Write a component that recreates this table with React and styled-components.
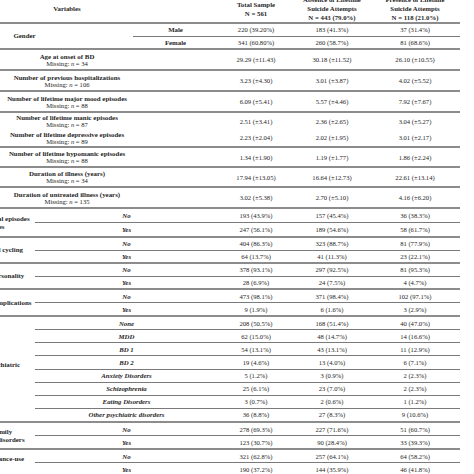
import styled, { createGlobalStyle } from "styled-components";

const GlobalStyle = createGlobalStyle`
  html, body {
    margin: 0;
    padding: 0;
    background: #fff;
  }
  body {
    font-family: "Liberation Serif", "DejaVu Serif", serif;
    color: #262626;
  }
`;

// value columns: total sample, absence, presence
const VALUE_COLS = "76px 76px 90px";

const measures = [
  {
    h: 21,
    items: [
      { label: "Age at onset of BD", missing: 34, values: ["29.29 (±11.43)", "30.18 (±11.52)", "26.10 (±10.55)"] },
    ],
  },
  {
    h: 21,
    items: [
      { label: "Number of previous hospitalizations", missing: 106, values: ["3.23 (±4.30)", "3.01 (±3.87)", "4.02 (±5.52)"] },
    ],
  },
  {
    h: 21,
    items: [
      { label: "Number of lifetime major mood episodes", missing: 88, values: ["6.09 (±5.41)", "5.57 (±4.46)", "7.92 (±7.67)"] },
    ],
  },
  {
    h: 35,
    items: [
      { label: "Number of lifetime manic episodes", missing: 87, values: ["2.51 (±3.41)", "2.36 (±2.65)", "3.04 (±5.27)"] },
      { label: "Number of lifetime depressive episodes", missing: 89, values: ["2.23 (±2.04)", "2.02 (±1.95)", "3.01 (±2.17)"] },
    ],
  },
  {
    h: 20,
    items: [
      { label: "Number of lifetime hypomanic episodes", missing: 88, values: ["1.34 (±1.90)", "1.19 (±1.77)", "1.86 (±2.24)"] },
    ],
  },
  {
    h: 20,
    items: [
      { label: "Duration of illness (years)", missing: 34, values: ["17.94 (±13.05)", "16.64 (±12.73)", "22.61 (±13.14)"] },
    ],
  },
  {
    h: 21,
    items: [
      { label: "Duration of untreated illness (years)", missing: 135, values: ["3.02 (±5.38)", "2.70 (±5.10)", "4.16 (±6.20)"] },
    ],
  },
];

const categories = [
  {
    h: 29,
    label: ["Number of lifetime seasonal episodes", "with mixed features"],
    rows: [
      ["No", "193 (43.9%)", "157 (45.4%)", "36 (38.3%)"],
      ["Yes", "247 (56.1%)", "189 (54.6%)", "58 (61.7%)"],
    ],
  },
  {
    h: 26,
    label: ["Lifetime history of rapid cycling"],
    rows: [
      ["No", "404 (86.3%)", "323 (88.7%)", "81 (77.9%)"],
      ["Yes", "64 (13.7%)", "41 (11.3%)", "23 (22.1%)"],
    ],
  },
  {
    h: 26,
    label: ["Comorbid borderline personality"],
    rows: [
      ["No", "378 (93.1%)", "297 (92.5%)", "81 (95.3%)"],
      ["Yes", "28 (6.9%)", "24 (7.5%)", "4 (4.7%)"],
    ],
  },
  {
    h: 27,
    label: ["Pregnancy and delivery complications"],
    rows: [
      ["No", "473 (98.1%)", "371 (98.4%)", "102 (97.1%)"],
      ["Yes", "9 (1.9%)", "6 (1.6%)", "3 (2.9%)"],
    ],
  },
  {
    h: 106,
    label: ["Lifetime comorbid psychiatric", "disorders"],
    rows: [
      ["None", "208 (50.5%)", "168 (51.4%)", "40 (47.0%)"],
      ["MDD", "62 (15.0%)", "48 (14.7%)", "14 (16.6%)"],
      ["BD 1", "54 (13.1%)", "43 (13.1%)", "11 (12.9%)"],
      ["BD 2", "19 (4.6%)", "13 (4.0%)", "6 (7.1%)"],
      ["Anxiety Disorders", "5 (1.2%)", "3 (0.9%)", "2 (2.3%)"],
      ["Schizophrenia", "25 (6.1%)", "23 (7.0%)", "2 (2.3%)"],
      ["Eating Disorders", "3 (0.7%)", "2 (0.6%)", "1 (1.2%)"],
      ["Other psychiatric disorders", "36 (8.8%)", "27 (8.3%)", "9 (10.6%)"],
    ],
  },
  {
    h: 27,
    label: ["Positive history in family", "members of psychiatric disorders"],
    rows: [
      ["No", "278 (69.3%)", "227 (71.6%)", "51 (60.7%)"],
      ["Yes", "123 (30.7%)", "90 (28.4%)", "33 (39.3%)"],
    ],
  },
  {
    h: 27,
    label: ["Lifetime comorbid substance-use", "disorders"],
    rows: [
      ["No", "321 (62.8%)", "257 (64.1%)", "64 (58.2%)"],
      ["Yes", "190 (37.2%)", "144 (35.9%)", "46 (41.8%)"],
    ],
  },
];

function App() {
  return (
    <Sheet>
      <GlobalStyle />
      <Table>
        <HeadRow>
          <HeadCell>Variables</HeadCell>
          <HeadCell>
            <span>Total Sample</span>
            <span>N = 561</span>
          </HeadCell>
          <HeadCell>
            <span>Absence of Lifetime</span>
            <span>Suicide Attempts</span>
            <span>N = 443 (79.0%)</span>
          </HeadCell>
          <HeadCell>
            <span>Presence of Lifetime</span>
            <span>Suicide Attempts</span>
            <span>N = 118 (21.0%)</span>
          </HeadCell>
        </HeadRow>

        <Group $label={217} $h={26}>
          <GroupLabel>Gender</GroupLabel>
          <SubRows>
            <SubRow $sub={85} $dark>
              <SubName>Male</SubName>
              <Value>220 (39.20%)</Value>
              <Value>183 (41.3%)</Value>
              <Value>37 (31.4%)</Value>
            </SubRow>
            <SubRow $sub={85} $dark>
              <SubName>Female</SubName>
              <Value>341 (60.80%)</Value>
              <Value>260 (58.7%)</Value>
              <Value>81 (68.6%)</Value>
            </SubRow>
          </SubRows>
        </Group>

        {measures.map((block, i) => (
          <MeasureBlock key={i} $h={block.h}>
            {block.items.map((m) => (
              <MeasureRow key={m.label}>
                <MeasureLabel>
                  <strong>{m.label}</strong>
                  <span>
                    Missing: <em>n</em> = {m.missing}
                  </span>
                </MeasureLabel>
                {m.values.map((v, j) => (
                  <Value key={j}>{v}</Value>
                ))}
              </MeasureRow>
            ))}
          </MeasureBlock>
        ))}

        {categories.map((cat, i) => (
          <Group key={i} $label={119} $h={cat.h}>
            <GroupLabel>
              {cat.label.map((line) => (
                <span key={line}>{line}</span>
              ))}
            </GroupLabel>
            <SubRows>
              {cat.rows.map(([name, ...vals]) => (
                <SubRow key={name} $sub={183}>
                  <SubName $italic>{name}</SubName>
                  {vals.map((v, j) => (
                    <Value key={j}>{v}</Value>
                  ))}
                </SubRow>
              ))}
            </SubRows>
          </Group>
        ))}
      </Table>
    </Sheet>
  );
}

export default App;

const Sheet = styled.div`
  width: 474px;
  height: 474px;
  overflow: hidden;
  background: #fff;
`;

const Table = styled.div`
  width: 544px;
  margin-left: -84px;
  margin-top: -5px;
  font-size: 6.6px;
`;

const HeadRow = styled.div`
  display: grid;
  grid-template-columns: 302px ${VALUE_COLS};
  height: 29px;
  box-sizing: border-box;
  border-bottom: 2px solid #8c8c8c;
  font-weight: bold;
  font-size: 6.8px;
  line-height: 9px;
`;

const HeadCell = styled.div`
  display: flex;
  flex-direction: column;
  align-items: center;
  justify-content: center;
  text-align: center;
`;

const Group = styled.div`
  display: grid;
  grid-template-columns: ${(p) => p.$label}px 1fr;
  height: ${(p) => p.$h}px;
  box-sizing: border-box;
  border-bottom: 2px solid #8c8c8c;
`;

const GroupLabel = styled.div`
  display: flex;
  flex-direction: column;
  align-items: center;
  justify-content: center;
  text-align: center;
  white-space: nowrap;
  font-weight: bold;
  font-size: 6.9px;
  line-height: 8px;
`;

const SubRows = styled.div`
  display: flex;
  flex-direction: column;
`;

const SubRow = styled.div`
  flex: 1;
  display: grid;
  grid-template-columns: ${(p) => p.$sub}px ${VALUE_COLS};
  align-items: center;

  & + & {
    border-top: 1px solid ${(p) => (p.$dark ? "#4a4a4a" : "#7a7a7a")};
  }
`;

const SubName = styled.div`
  text-align: center;
  font-weight: bold;
  font-size: 6.8px;
  font-style: ${(p) => (p.$italic ? "italic" : "normal")};
`;

const Value = styled.div`
  text-align: center;
  white-space: nowrap;
`;

const MeasureBlock = styled.div`
  display: flex;
  flex-direction: column;
  height: ${(p) => p.$h}px;
  box-sizing: border-box;
  border-bottom: 2px solid #8c8c8c;
`;

const MeasureRow = styled.div`
  flex: 1;
  display: grid;
  grid-template-columns: 302px ${VALUE_COLS};
  align-items: center;
`;

const MeasureLabel = styled.div`
  display: flex;
  flex-direction: column;
  align-items: center;
  line-height: 7px;
  white-space: nowrap;

  strong {
    font-weight: bold;
    font-size: 6.9px;
  }
`;
